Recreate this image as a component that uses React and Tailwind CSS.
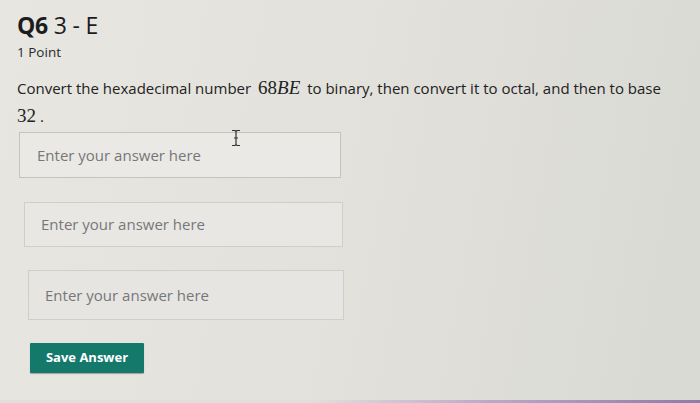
import React from "react";

export default function App() {
  return (
    <div className="w-[700px] h-[403px] overflow-hidden relative bg-[linear-gradient(100deg,#e7e6e1_0%,#e2e1dc_50%,#d9d9d4_100%)] text-[#222] font-['Open_Sans',sans-serif]">
      <div className="pl-[17px] pt-[11px]">
        <div className="text-[23px] leading-[28px] text-[#1c1c1c] tracking-[-0.2px]">
          <span className="font-bold">Q6</span> <span>3 - E</span>
        </div>
        <div className="text-[13.5px] leading-[18px] mt-[4px] text-[#2a2a2a]">1 Point</div>
        <div className="mt-[13px] text-[15px] leading-[27px] text-[#222] pr-[10px]">
          Convert the hexadecimal number{" "}
          <span className="font-['Liberation_Serif',serif] text-[19px] mx-[3px]">
            68<i>BE</i>
          </span>{" "}
          to binary, then convert it to octal, and then to base
          <br />
          <span className="font-['Liberation_Serif',serif] text-[19px]">32</span> .
        </div>
      </div>

      <div className="flex flex-col mt-[2px]">
        <div className="ml-[19px] w-[322px] h-[46px] border border-[#c4c4bf] bg-[#eae9e5] flex items-center pl-[17px] text-[15px] text-[#77777a]">
          Enter your answer here
        </div>
        <div className="ml-[24px] mt-[24px] w-[319px] h-[45px] border border-[#cfcfca] bg-[#e8e7e3] flex items-center pl-[16px] text-[15px] text-[#77777a]">
          Enter your answer here
        </div>
        <div className="ml-[28px] mt-[23px] w-[316px] h-[50px] border border-[#cfcfca] bg-[#e6e5e1] flex items-center pl-[16px] text-[15px] text-[#77777a]">
          Enter your answer here
        </div>
        <button className="ml-[30px] mt-[23px] w-[114px] h-[30px] bg-[#14796a] text-white text-[13px] font-bold flex items-center justify-center rounded-[1px] shadow-[0_1px_1px_rgba(0,0,0,0.3)]">
          Save Answer
        </button>
      </div>

      <svg className="absolute left-[230px] top-[129px]" width="12" height="18" viewBox="0 0 12 18">
        <path d="M2 1.5h3l1 1 1-1h3M6 2.5v13M2 16.5h3l1-1 1 1h3M4 9h4" stroke="#333" strokeWidth="1.2" fill="none" />
      </svg>

      <div className="absolute left-0 right-0 bottom-0 h-[3px] bg-[linear-gradient(90deg,#e0dfdc_0%,#e0dfdc_45%,#b9a9c9_70%,#8f7aa8_100%)]" />
    </div>
  );
}
